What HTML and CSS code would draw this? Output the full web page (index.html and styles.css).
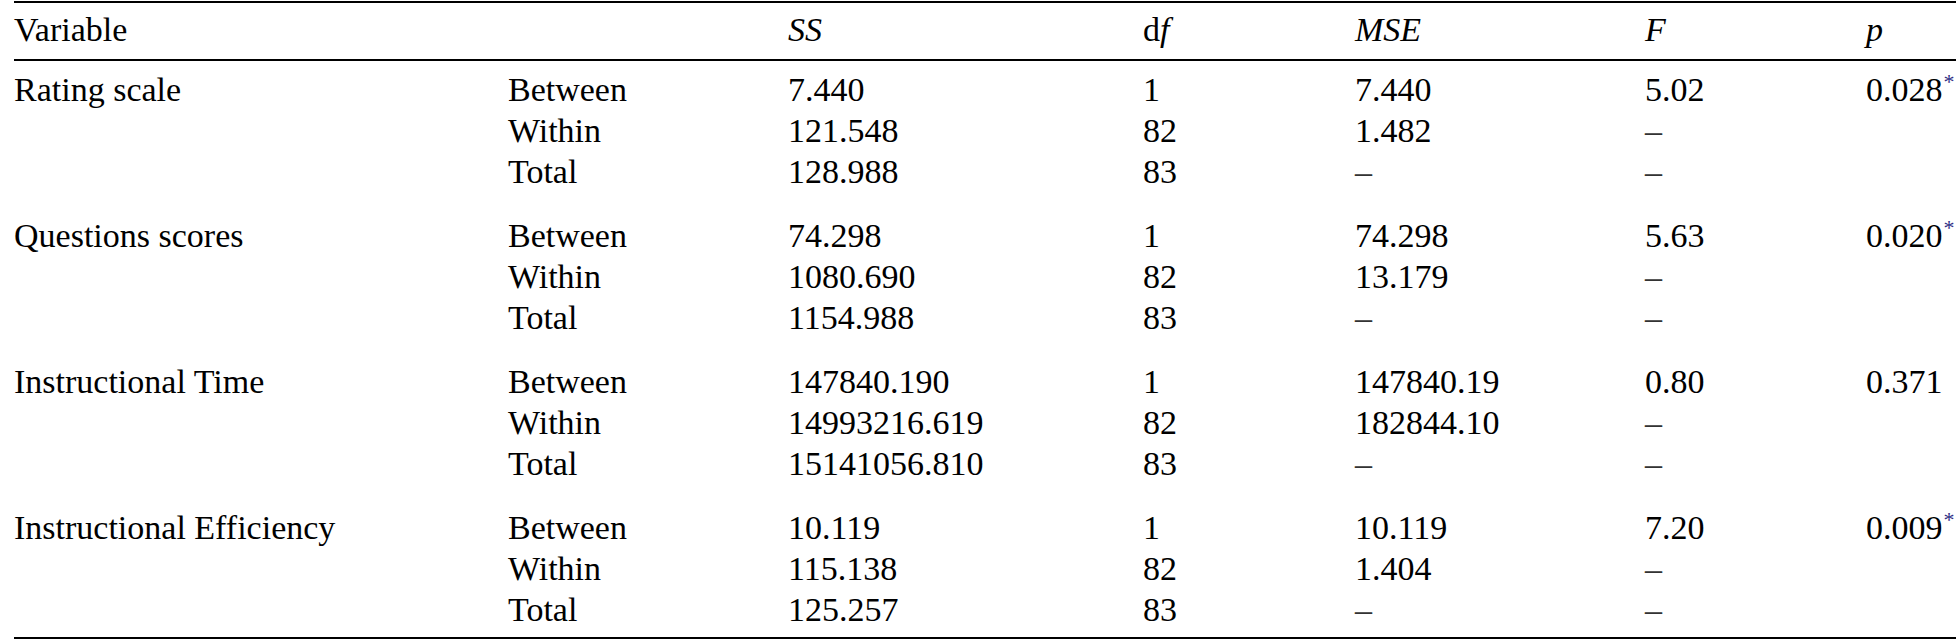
FILE: index.html
```html
<!DOCTYPE html>
<html>
<head>
    <meta charset="UTF-8">
    <title>ANOVA results</title>
    <link rel="stylesheet" href="styles.css">
</head>
<body>
<div class="container">
    <table class="anova">
        <colgroup>
            <col class="c-var">
            <col class="c-src">
            <col class="c-ss">
            <col class="c-df">
            <col class="c-mse">
            <col class="c-f">
            <col class="c-p">
        </colgroup>
        <thead>
            <tr>
                <th>Variable</th>
                <th></th>
                <th><i>SS</i></th>
                <th>d<i>f</i></th>
                <th><i>MSE</i></th>
                <th><i>F</i></th>
                <th><i>p</i></th>
            </tr>
        </thead>
        <tbody>
            <tr class="first">
                <td>Rating scale</td>
                <td>Between</td>
                <td>7.440</td>
                <td>1</td>
                <td>7.440</td>
                <td>5.02</td>
                <td>0.028<sup class="sig">*</sup></td>
            </tr>
            <tr>
                <td></td>
                <td>Within</td>
                <td>121.548</td>
                <td>82</td>
                <td>1.482</td>
                <td class="dash">&ndash;</td>
                <td></td>
            </tr>
            <tr>
                <td></td>
                <td>Total</td>
                <td>128.988</td>
                <td>83</td>
                <td class="dash">&ndash;</td>
                <td class="dash">&ndash;</td>
                <td></td>
            </tr>

            <tr class="first">
                <td>Questions scores</td>
                <td>Between</td>
                <td>74.298</td>
                <td>1</td>
                <td>74.298</td>
                <td>5.63</td>
                <td>0.020<sup class="sig">*</sup></td>
            </tr>
            <tr>
                <td></td>
                <td>Within</td>
                <td>1080.690</td>
                <td>82</td>
                <td>13.179</td>
                <td class="dash">&ndash;</td>
                <td></td>
            </tr>
            <tr>
                <td></td>
                <td>Total</td>
                <td>1154.988</td>
                <td>83</td>
                <td class="dash">&ndash;</td>
                <td class="dash">&ndash;</td>
                <td></td>
            </tr>

            <tr class="first">
                <td>Instructional Time</td>
                <td>Between</td>
                <td>147840.190</td>
                <td>1</td>
                <td>147840.19</td>
                <td>0.80</td>
                <td>0.371</td>
            </tr>
            <tr>
                <td></td>
                <td>Within</td>
                <td>14993216.619</td>
                <td>82</td>
                <td>182844.10</td>
                <td class="dash">&ndash;</td>
                <td></td>
            </tr>
            <tr>
                <td></td>
                <td>Total</td>
                <td>15141056.810</td>
                <td>83</td>
                <td class="dash">&ndash;</td>
                <td class="dash">&ndash;</td>
                <td></td>
            </tr>

            <tr class="first">
                <td>Instructional Efficiency</td>
                <td>Between</td>
                <td>10.119</td>
                <td>1</td>
                <td>10.119</td>
                <td>7.20</td>
                <td>0.009<sup class="sig">*</sup></td>
            </tr>
            <tr>
                <td></td>
                <td>Within</td>
                <td>115.138</td>
                <td>82</td>
                <td>1.404</td>
                <td class="dash">&ndash;</td>
                <td></td>
            </tr>
            <tr class="last">
                <td></td>
                <td>Total</td>
                <td>125.257</td>
                <td>83</td>
                <td class="dash">&ndash;</td>
                <td class="dash">&ndash;</td>
                <td></td>
            </tr>
        </tbody>
    </table>
</div>
</body>
</html>
```

FILE: styles.css
```css
        body {
            margin: 0;
            color: #000;
            background-color: #fff;
            font-family: "Liberation Serif", "Times New Roman", serif;
        }
        .container {
            padding-left: 14px;
            padding-top: 1px;
        }
        .anova {
            width: 1942px;
            table-layout: fixed;
            border-collapse: collapse;
            font-size: 34px;
            line-height: 41px;
        }
        .c-var { width: 494px; }
        .c-src { width: 280px; }
        .c-ss { width: 355px; }
        .c-df { width: 212px; }
        .c-mse { width: 290px; }
        .c-f { width: 221px; }
        .c-p { width: 90px; }

        .anova th,
        .anova td {
            padding: 0;
            text-align: left;
            vertical-align: top;
            white-space: nowrap;
        }
        .anova thead th {
            font-weight: normal;
            padding-top: 6px;
            padding-bottom: 9px;
            border-top: 2px solid #000;
            border-bottom: 2px solid #000;
        }
        .anova tbody tr.first td {
            padding-top: 23px;
        }
        .anova tbody tr:first-child td {
            padding-top: 8px;
        }
        .anova tbody tr.last td {
            padding-bottom: 7px;
            border-bottom: 2px solid #000;
        }
        .dash {
            color: #333;
        }
        .sig {
            color: #2e2e86;
            font-size: 22px;
            line-height: 0;
            vertical-align: 12px;
            margin-left: 1px;
        }
```
